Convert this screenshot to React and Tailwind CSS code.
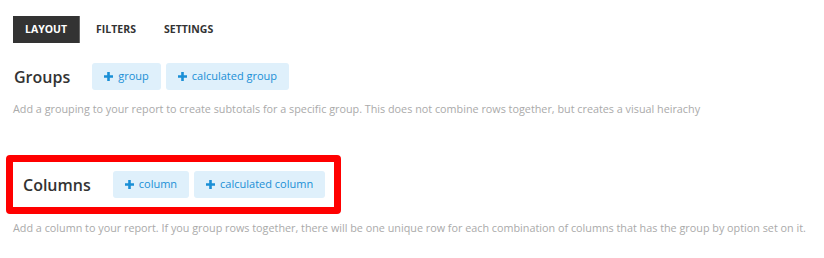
import React, { useState } from 'react';

const tabs = ['Layout', 'Filters', 'Settings'];

const PlusIcon = () => (
  <svg width="9" height="9" viewBox="0 0 9 9" className="shrink-0">
    <path d="M3.2 0h2.6v3.2H9v2.6H5.8V9H3.2V5.8H0V3.2h3.2z" fill="#1a8fd6" />
  </svg>
);

const AddButton = ({ label }) => (
  <button className="flex h-[27px] items-center gap-[5px] rounded-[3px] bg-[#dff0fb] px-3 text-[11px] text-[#1a8fd6]">
    <PlusIcon />
    {label}
  </button>
);

const Section = ({ title, buttons }) => (
  <div className="flex items-center">
    <h2 className="mr-[22px] text-[16px] font-semibold text-[#333]">{title}</h2>
    <div className="flex gap-[5px]">
      {buttons.map((b) => (
        <AddButton key={b} label={b} />
      ))}
    </div>
  </div>
);

export default function App() {
  const [active, setActive] = useState('Layout');

  return (
    <div className="min-h-[258px] bg-white px-[13px] pt-[16px] font-['Open_Sans',sans-serif]">
      <div className="flex gap-1">
        {tabs.map((t) => (
          <button
            key={t}
            onClick={() => setActive(t)}
            className={
              active === t
                ? 'h-[27px] border-r border-[#666] bg-[#333] px-3 text-[10.5px] font-bold uppercase text-white'
                : 'h-[27px] px-3 text-[10.5px] font-bold uppercase text-[#333]'
            }
          >
            {t}
          </button>
        ))}
      </div>

      <div className="mt-[20px] pl-[1px]">
        <Section title="Groups" buttons={['group', 'calculated group']} />
      </div>
      <p className="mt-[11px] text-[10.8px] leading-[16px] text-[#aaa]">
        Add a grouping to your report to create subtotals for a specific group. This does not combine rows together, but creates a visual heirachy
      </p>

      {/* highlighted section */}
      <div className="ml-[-7px] mt-[38px] w-[335px] rounded-[4px] border-[7px] border-[#ff0000] py-[9px] pl-[10px]">
        <Section title="Columns" buttons={['column', 'calculated column']} />
      </div>
      <p className="mt-[6px] text-[10.8px] leading-[16px] text-[#aaa]">
        Add a column to your report. If you group rows together, there will be one unique row for each combination of columns that has the group by option set on it.
      </p>
    </div>
  );
}
